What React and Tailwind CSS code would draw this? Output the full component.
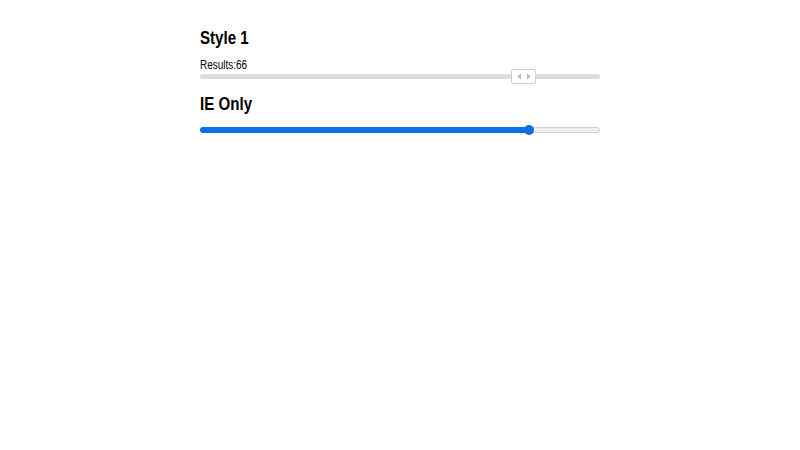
import React from 'react'

function Caret({ dir }) {
  return (
    <svg width="5" height="7" viewBox="0 0 5 7" className="fill-[#b5b5b5]">
      {dir === 'left' ? <path d="M4 0.5 L0.5 3.5 L4 6.5 Z" /> : <path d="M1 0.5 L4.5 3.5 L1 6.5 Z" />}
    </svg>
  )
}

export default function App() {
  return (
    <div className="w-[800px] h-[450px] bg-white font-['Liberation_Sans',Arial,sans-serif] text-black">
      <div className="w-[400px] mx-auto pt-[27px] flex flex-col">
        <h3 className="text-[18px] leading-[22px] font-bold h-[22px] origin-left scale-x-[0.84]">Style 1</h3>
        <p className="mt-[9px] text-[12px] leading-[14px] h-[14px] origin-left scale-x-[0.83]">Results:66</p>
        <div className="relative mt-[2px] h-[5px] rounded-full bg-[#dddddd]">
          <div className="absolute left-[311px] top-[-5px] w-[25px] h-[15px] bg-white border border-[#cfcfcf] rounded-[2px] flex items-center justify-center gap-[4px]">
            <Caret dir="left" />
            <Caret dir="right" />
          </div>
        </div>
        <h3 className="mt-[14px] text-[18px] leading-[22px] font-bold h-[22px] origin-left scale-x-[0.84]">IE Only</h3>
        <div className="relative mt-[12px] h-[6px] rounded-full bg-[#efefef] border border-[#d0d0d0]">
          <div className="absolute left-[-1px] top-[-1px] h-[6px] w-[329px] rounded-full bg-[#0b70e6]" />
          <div className="absolute left-[323px] top-[-3px] w-[10px] h-[10px] rounded-full bg-[#0b70e6]" />
        </div>
      </div>
    </div>
  )
}
